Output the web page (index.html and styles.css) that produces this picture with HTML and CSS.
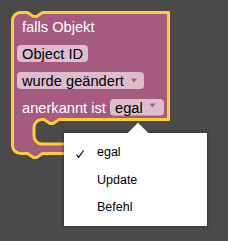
FILE: index.html
```html
<!DOCTYPE html>
<html>
<head>
    <meta charset="UTF-8">
    <title>Blockly Workspace</title>
    <link rel="stylesheet" href="styles.css">
</head>
<body>
    <div class="workspace">
        <!-- Block canvas -->
        <svg class="canvas" width="228" height="241" viewBox="0 0 228 241">
            <g class="block selected">
                <path class="block-shape" d="M 12.5,20.5 A 8,8 0 0 1 20.5,12.5 H 27.5 l 6,4 h 3 l 6,-4 H 168.5 V 119.5 H 59 l -6,4 h -3 l -6,-4 H 42 a 8,8 0 0 0 -8,8 V 136 a 8,8 0 0 0 8,8 H 110 V 153.5 H 42.5 l -6,4 h -3 l -6,-4 H 20.5 a 8,8 0 0 1 -8,-8 Z"/>
                <text class="label" x="22" y="32">falls Objekt</text>

                <rect class="field" x="17" y="45" width="71" height="17" rx="4"/>
                <text class="field-text" x="22" y="58.5">Object ID</text>

                <rect class="field" x="17" y="72" width="127" height="17" rx="4"/>
                <text class="field-text" x="22" y="85.5">wurde geändert</text>
                <polygon class="field-arrow" points="131,78.5 137,78.5 134,82.5"/>

                <text class="label" x="22" y="112.5">anerkannt ist</text>
                <rect class="field" x="110" y="99" width="54" height="16.5" rx="4"/>
                <text class="field-text" x="115" y="112.5">egal</text>
                <polygon class="field-arrow" points="149.5,103.5 155.5,103.5 152.5,107.5"/>
            </g>
        </svg>

        <!-- Dropdown menu -->
        <div class="dropdown">
            <div class="dropdown-arrow"></div>
            <div class="menu">
                <div class="menu-item checked">
                    <svg class="check" width="8" height="8" viewBox="0 0 8 8">
                        <polyline points="0.5,4.5 2.6,7.3 7.5,0.5"/>
                    </svg>
                    egal
                </div>
                <div class="menu-item">Update</div>
                <div class="menu-item">Befehl</div>
            </div>
        </div>
    </div>
</body>
</html>
```

FILE: styles.css
```css
:root {
    --workspace-bg: #4a4a4a;
    --block-color: #a55b80;
    --field-bg: #dbbdcc;
    --selected-color: #fc3;
    --menu-bg: #ffffff;
    --menu-text: #000000;
}
body {
    margin: 0;
    padding: 0;
    background-color: var(--workspace-bg);
    font-family: "Liberation Sans", Arial, sans-serif;
    overflow: hidden;
}
.workspace {
    position: relative;
    width: 228px;
    height: 241px;
}
.canvas {
    display: block;
}

/* --- Block --- */
.block-shape {
    fill: var(--block-color);
    stroke: var(--selected-color);
    stroke-width: 3px;
    stroke-linejoin: round;
}
.block text {
    font-family: "Liberation Sans", Arial, sans-serif;
    font-size: 14.67px;
}
.label {
    fill: #fff;
}
.field {
    fill: var(--field-bg);
}
.field-text {
    fill: #000;
}
.field-arrow {
    fill: var(--block-color);
}

/* --- Dropdown --- */
.dropdown {
    position: absolute;
    left: 64px;
    top: 133px;
    width: 143px;
    height: 93px;
    z-index: 1;
    background-color: var(--menu-bg);
    box-shadow: 0 0 3px 1px rgba(0,0,0,0.3);
}
.dropdown-arrow {
    position: absolute;
    left: 65.5px;
    top: -6.7px;
    width: 16px;
    height: 16px;
    background-color: var(--menu-bg);
    transform: rotate(45deg);
}
.menu {
    position: relative;
    padding: 6px 0 4px;
}
.menu-item {
    position: relative;
    height: 27.5px;
    line-height: 27.5px;
    padding-left: 33px;
    font-size: 12.5px;
    color: var(--menu-text);
    white-space: nowrap;
}
.menu-item .check {
    position: absolute;
    left: 11.5px;
    top: 10.5px;
}
.check polyline {
    fill: none;
    stroke: #000;
    stroke-width: 1.2px;
}
```
